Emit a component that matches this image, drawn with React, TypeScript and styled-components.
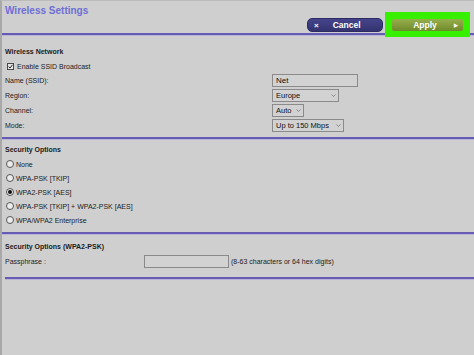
import React from 'react';
import styled, { createGlobalStyle } from 'styled-components';

const GlobalStyle = createGlobalStyle`
  html, body {
    margin: 0;
    padding: 0;
    background: #cfcfcf;
  }
  body {
    font-family: 'Liberation Sans', Arial, sans-serif;
  }
`;

const Page = styled.div`
  width: 474px;
  height: 355px;
  box-sizing: border-box;
  border-left: 2px solid #a9a9a9;
  border-top: 1px solid #bcbcbc;
  background: #cfcfcf;
  color: #1c1c1c;
  font-size: 7px;
  overflow: hidden;
`;

const Header = styled.header`
  display: flex;
  justify-content: space-between;
  align-items: flex-start;
  height: 32px;
  padding: 0 4px 0 3px;
`;

const Title = styled.h1`
  margin: 4px 0 0;
  font-size: 10px;
  line-height: 12px;
  font-weight: bold;
  color: #6e6ed6;
`;

const Actions = styled.div`
  display: flex;
  align-items: flex-start;
  gap: 2px;
  margin-top: 11px;
`;

const CancelButton = styled.button`
  display: flex;
  align-items: center;
  box-sizing: border-box;
  width: 76px;
  height: 14px;
  margin-top: 6px;
  padding: 0 0 0 6px;
  border: 1px solid #2b2a62;
  border-radius: 5px;
  background: linear-gradient(#45448c, #34336f);
  color: #fff;
  font-family: 'Liberation Sans', Arial, sans-serif;
  font-size: 8.5px;
  font-weight: bold;
  cursor: pointer;
`;

const CancelMark = styled.span`
  margin-right: 14px;
  font-size: 8px;
`;

const Highlight = styled.div`
  position: relative;
  z-index: 1;
  box-sizing: border-box;
  width: 85px;
  height: 25px;
  padding: 7px 7px 6px;
  background: #36f000;
`;

const ApplyButton = styled.button`
  display: grid;
  grid-template-columns: 1fr auto 1fr;
  align-items: center;
  width: 100%;
  height: 12px;
  padding: 0 5px 0 0;
  border: none;
  border-radius: 2px;
  background: linear-gradient(#98ae4c, #6f8a2c);
  color: #fff;
  font-family: 'Liberation Sans', Arial, sans-serif;
  font-size: 8.5px;
  font-weight: bold;
  cursor: pointer;
`;

const ApplyArrow = styled.span`
  justify-self: end;
  font-size: 5px;
`;

const Divider = styled.div<{ $inset?: number }>`
  height: 2px;
  margin: 0 0 1px ${p => p.$inset ?? 0}px;
  background: #665cb4;
  box-shadow: 0 1px 0 #b9b5d8;
`;

const Section = styled.section<{ $top: number; $bottom: number }>`
  padding: ${p => p.$top}px 0 ${p => p.$bottom}px 3px;
`;

const SectionTitle = styled.h2`
  margin: 0;
  font-size: 7px;
  line-height: 14px;
  font-weight: bold;
`;

const CheckRow = styled.label`
  display: flex;
  align-items: center;
  gap: 3px;
  height: 14px;
  padding-left: 2px;
`;

const CheckBox = styled.span`
  display: grid;
  place-items: center;
  box-sizing: border-box;
  width: 7px;
  height: 7px;
  border: 1px solid #4a4a4a;
  background: #e6e6e6;
`;

const FormGrid = styled.div<{ $cols: string }>`
  display: grid;
  grid-template-columns: ${p => p.$cols};
  grid-auto-rows: 15px;
  align-items: center;
  justify-items: start;
`;

const PassGrid = styled(FormGrid)`
  grid-auto-rows: 14px;
`;

const TextInput = styled.input<{ $w: number }>`
  box-sizing: border-box;
  width: ${p => p.$w}px;
  height: 13px;
  margin: 0;
  padding: 0 3px;
  border: 1px solid #8a8a8a;
  background: #d2d2d2;
  color: #111;
  font-family: 'Liberation Sans', Arial, sans-serif;
  font-size: 8px;
  outline: none;
`;

const Dropdown = styled.div<{ $w: number }>`
  display: flex;
  align-items: center;
  justify-content: space-between;
  box-sizing: border-box;
  width: ${p => p.$w}px;
  height: 13px;
  padding: 0 2px 0 3px;
  border: 1px solid #8a8a8a;
  background: #d2d2d2;
  color: #111;
  font-size: 7.5px;
`;

const Hint = styled.span`
  margin-left: 2px;
`;

const RadioRow = styled.label`
  display: flex;
  align-items: center;
  gap: 2px;
  height: 14px;
  padding-left: 1px;
`;

const Radio = styled.span<{ $checked?: boolean }>`
  display: grid;
  place-items: center;
  box-sizing: border-box;
  width: 8px;
  height: 8px;
  border: 1px solid #555;
  border-radius: 50%;
  background: #ececec;
  &::after {
    content: '';
    width: 4px;
    height: 4px;
    border-radius: 50%;
    background: ${p => (p.$checked ? '#111' : 'transparent')};
  }
`;

const Chevron = () => (
  <svg width="5" height="3" viewBox="0 0 5 3">
    <path d="M0.5 0.5 L2.5 2.5 L4.5 0.5" fill="none" stroke="#777" strokeWidth="0.8" />
  </svg>
);

const Check = () => (
  <svg width="5" height="5" viewBox="0 0 5 5">
    <path d="M0.6 2.6 L2 4 L4.5 0.8" fill="none" stroke="#222" strokeWidth="1" />
  </svg>
);

const securityOptions = [
  { label: 'None', checked: false },
  { label: 'WPA-PSK [TKIP]', checked: false },
  { label: 'WPA2-PSK [AES]', checked: true },
  { label: 'WPA-PSK [TKIP] + WPA2-PSK [AES]', checked: false },
  { label: 'WPA/WPA2 Enterprise', checked: false },
];

const App: React.FC = () => {
  return (
    <Page>
      <GlobalStyle />
      <Header>
        <Title>Wireless Settings</Title>
        <Actions>
          <CancelButton>
            <CancelMark>×</CancelMark>
            Cancel
          </CancelButton>
          <Highlight>
            <ApplyButton>
              <span />
              Apply
              <ApplyArrow>▶</ApplyArrow>
            </ApplyButton>
          </Highlight>
        </Actions>
      </Header>
      <Divider />

      <Section $top={9} $bottom={4}>
        <SectionTitle>Wireless Network</SectionTitle>
        <CheckRow>
          <CheckBox>
            <Check />
          </CheckBox>
          Enable SSID Broadcast
        </CheckRow>
        <FormGrid $cols="267px auto">
          <span>Name (SSID):</span>
          <TextInput $w={86} value="Net" readOnly />
          <span>Region:</span>
          <Dropdown $w={67}>
            Europe <Chevron />
          </Dropdown>
          <span>Channel:</span>
          <Dropdown $w={32}>
            Auto <Chevron />
          </Dropdown>
          <span>Mode:</span>
          <Dropdown $w={72}>
            Up to 150 Mbps <Chevron />
          </Dropdown>
        </FormGrid>
      </Section>
      <Divider />

      <Section $top={3} $bottom={5}>
        <SectionTitle>Security Options</SectionTitle>
        {securityOptions.map(opt => (
          <RadioRow key={opt.label}>
            <Radio $checked={opt.checked} />
            {opt.label}
          </RadioRow>
        ))}
      </Section>
      <Divider />

      <Section $top={5} $bottom={9}>
        <SectionTitle>Security Options (WPA2-PSK)</SectionTitle>
        <PassGrid $cols="139px 85px auto">
          <span>Passphrase :</span>
          <TextInput $w={85} value="" readOnly />
          <Hint>(8-63 characters or 64 hex digits)</Hint>
        </PassGrid>
      </Section>
      <Divider $inset={3} />
    </Page>
  );
};

export default App;
